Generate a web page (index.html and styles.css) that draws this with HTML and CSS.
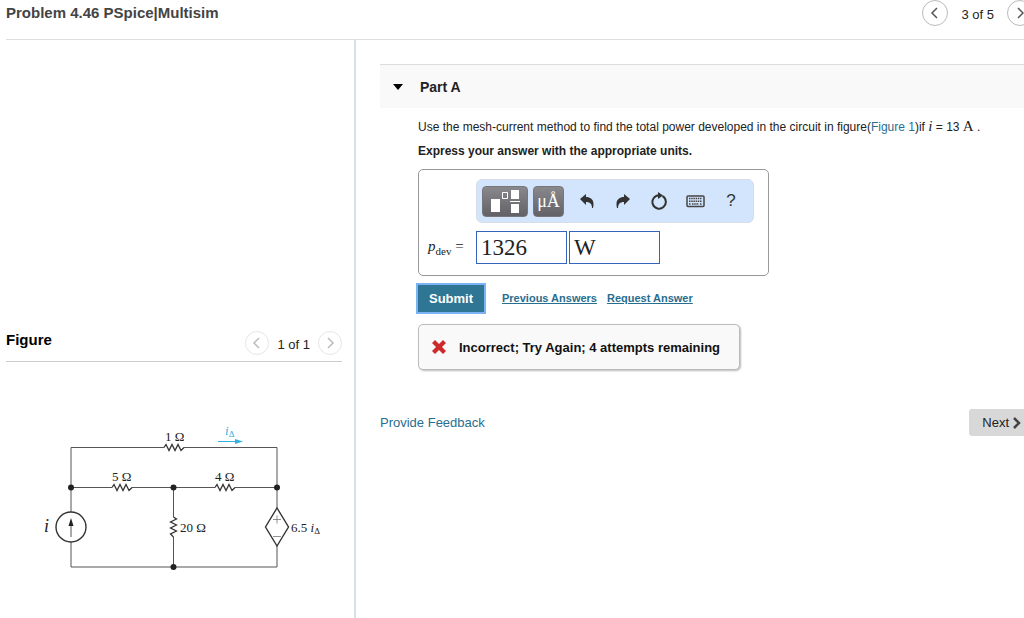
FILE: index.html
```
<!DOCTYPE html>
<html lang="en">
<head>
  <meta charset="UTF-8">
  <meta name="viewport" content="width=device-width, initial-scale=1.0">
  <title>Problem 4.46</title>
  <link rel="stylesheet" href="styles.css">
</head>
<body>
  <header class="header">
    <h1>Problem 4.46 PSpice|Multisim</h1>
    <nav class="pager">
      <button class="round" aria-label="Previous item">
        <svg width="10" height="12" viewBox="0 0 10 12"><path d="M7 1 2 6l5 5"/></svg>
      </button>
      <span>3 of 5</span>
      <button class="round" aria-label="Next item">
        <svg width="10" height="12" viewBox="0 0 10 12"><path d="M3 1l5 5-5 5"/></svg>
      </button>
    </nav>
  </header>

  <div class="columns">
    <aside class="left">
      <div class="figure-head">
        <h2>Figure</h2>
        <nav class="pager small">
          <button class="round" aria-label="Previous figure" disabled>
            <svg width="10" height="12" viewBox="0 0 10 12"><path d="M7 1 2 6l5 5"/></svg>
          </button>
          <span>1 of 1</span>
          <button class="round" aria-label="Next figure" disabled>
            <svg width="10" height="12" viewBox="0 0 10 12"><path d="M3 1l5 5-5 5"/></svg>
          </button>
        </nav>
      </div>

      <svg class="circuit" viewBox="6 372 336 210" role="img" aria-label="Circuit diagram">
        <!-- wires -->
        <g class="wire">
          <path d="M71 512V447.5H164M184 447.5H277V508"/>
          <path d="M71 487.5h41M132 487.5h83M235 487.5h42"/>
          <path d="M173.5 487v30M173.5 537v30"/>
          <path d="M71 542v25H277V546"/>
        </g>
        <!-- resistors -->
        <g class="resistor">
          <path d="M164 447.500l2-3 3 6 3-6 3 6 3-6 3 6 3-3"/>
          <path d="M112 487.500l2-3 3 6 3-6 3 6 3-6 3 6 3-3"/>
          <path d="M215 487.500l2-3 3 6 3-6 3 6 3-6 3 6 3-3"/>
          <path d="M173.500 517l3 2-6 3 6 3-6 3 6 3-6 3 3 3"/>
        </g>
        <!-- nodes -->
        <circle cx="71" cy="487.500" r="3"/>
        <circle cx="173.500" cy="487.500" r="3"/>
        <circle cx="277" cy="487.500" r="3"/>
        <circle cx="173.500" cy="567" r="3"/>
        <!-- current source -->
        <circle class="shape" cx="71" cy="527" r="15"/>
        <path class="wire" d="M71 537V524"/>
        <path d="M71 518l2.500 8h-5z"/>
        <!-- dependent source -->
        <path class="shape" d="M277 508l11.500 19L277 546l-11.500-19z"/>
        <path class="sign" d="M273 519.500h8M277 515.500v8M273 536.500h8"/>
        <!-- i delta arrow -->
        <path class="blue-line" d="M218 441.500h18"/>
        <path class="blue" d="M243 441.500l-8 2.500v-5z"/>
        <text class="blue" x="225" y="435"><tspan class="it">i</tspan><tspan class="sub" dy="2">Δ</tspan></text>
        <text x="165" y="441">1 Ω</text>
        <text x="112" y="481">5 Ω</text>
        <text x="215" y="481">4 Ω</text>
        <text x="180" y="532">20 Ω</text>
        <text x="291" y="532">6.5 <tspan class="it">i</tspan><tspan class="sub" dy="2">Δ</tspan></text>
        <text class="it source" x="44" y="532">i</text>
      </svg>
    </aside>

    <main class="right">
      <div class="part">
        <svg width="10" height="6" viewBox="0 0 10 6"><path d="M0 0h10L5 6z"/></svg>
        <h2>Part A</h2>
      </div>

      <section class="question">
        <p>Use the mesh-current method to find the total power developed in the circuit in figure(<a href="#">Figure 1</a>)if <i class="math">i</i> = 13 <span class="math">A</span> .</p>
        <p class="bold">Express your answer with the appropriate units.</p>

        <div class="answer">
          <div class="toolbar">
            <button class="key wide" aria-label="Templates">
              <svg width="30" height="26" viewBox="0 0 30 26">
                <path class="fill" d="M1 11h9v13H1zM21 2h8v9h-8zM21 16h8v9h-8zM20 13h10v1H20z"/>
                <path class="line" d="M12.500 4.500h5v6h-5z"/>
              </svg>
            </button>
            <button class="key">μÅ</button>
            <button class="tool" aria-label="Undo">
              <svg width="14" height="14" viewBox="0 0 14 14"><path d="M0 5l6-5v3c5 0 9 3 7 11l-1 0c0-4-2-6-6-6v3z"/></svg>
            </button>
            <button class="tool" aria-label="Redo">
              <svg width="14" height="14" viewBox="0 0 14 14"><path d="M14 5L8 0v3C3 3-1 6 1 14l1 0c0-4 2-6 6-6v3z"/></svg>
            </button>
            <button class="tool" aria-label="Reset">
              <svg width="16" height="18" viewBox="0 0 16 18"><path class="ring" d="M11.500 4.200A6.700 6.700 0 1 1 8 3.300"/><path d="M7 0l5 3.500L7 7z"/></svg>
            </button>
            <button class="tool" aria-label="Keyboard">
              <svg width="19" height="13" viewBox="0 0 19 13"><rect class="case" x="1" y="1" width="17" height="10.500" rx="1"/><path class="keys" d="M3 3.500h13M3 6.200h13M3 9h2M6 9h7M14 9h2"/></svg>
            </button>
            <button class="tool" aria-label="Help">?</button>
          </div>
          <div class="fields">
            <label for="value"><i>p</i><sub>dev</sub> =</label>
            <input id="value" type="text" value="1326">
            <input type="text" value="W" aria-label="Units">
          </div>
        </div>

        <div class="actions">
          <button class="submit">Submit</button>
          <a href="#">Previous Answers</a>
          <a href="#">Request Answer</a>
        </div>

        <div class="feedback">
          <svg width="14" height="14" viewBox="0 0 14 14"><path d="M3 0l4 4 4-4 3 3-4 4 4 4-3 3-4-4-4 4-3-3 4-4-4-4z"/></svg>
          <span>Incorrect; Try Again; 4 attempts remaining</span>
        </div>
      </section>

      <footer class="bottom">
        <a href="#">Provide Feedback</a>
        <button class="next">Next
          <svg width="8" height="12" viewBox="0 0 8 12"><path d="M1 1l5 5-5 5"/></svg>
        </button>
      </footer>
    </main>
  </div>
</body>
</html>
```
FILE: styles.css
```
* {
  box-sizing: border-box;
}

body {
  margin: 0;
  min-height: 100vh;
  display: flex;
  flex-direction: column;
  overflow-x: hidden;
  font-family: "Liberation Sans", Arial, sans-serif;
  font-size: 13px;
  color: #222;
  background: #fff;
}

h1, h2, p {
  margin: 0;
}

button {
  font-family: inherit;
  padding: 0;
  border: none;
}

a {
  color: #286e8f;
  text-decoration: none;
}

.header {
  display: flex;
  justify-content: space-between;
  margin-left: 6px;
  height: 40px;
  border-bottom: 1px solid #ddd;
}

.header h1 {
  font-size: 15px;
  line-height: 26px;
  color: #444;
}

.pager {
  display: flex;
  align-items: center;
  gap: 13px;
  font-size: 13px;
}

.header .pager {
  height: 26px;
  margin-right: -9px;
}

.pager span {
  padding-top: 3px;
}

.round {
  display: flex;
  align-items: center;
  justify-content: center;
  width: 26px;
  height: 26px;
  border: 1px solid #bbb;
  border-radius: 50%;
  background: #fff;
}

.round path {
  fill: none;
  stroke: #555;
  stroke-width: 1.5;
}

.small {
  gap: 8px;
}

.small .round {
  width: 24px;
  height: 24px;
  border-color: #e6e6e6;
}

.small .round path {
  stroke: #bbb;
}

.columns {
  flex: 1;
  display: flex;
}

/* left side with the figure */
.left {
  flex: 0 0 356px;
  padding: 290px 12px 0 6px;
  border-right: 2px solid #d5e0ea;
}

.figure-head {
  display: flex;
  justify-content: space-between;
  height: 32px;
  border-bottom: 1px solid #ccc;
}

.figure-head h2 {
  font-size: 15px;
  line-height: 20px;
  color: #000;
}

.figure-head .pager {
  height: 26px;
}

.circuit {
  display: block;
  width: 100%;
  margin-top: 10px;
  font-family: "Liberation Serif", serif;
  font-size: 13px;
  fill: #222;
}

.wire {
  fill: none;
  stroke: #555;
  stroke-width: 1;
}

.resistor {
  fill: none;
  stroke: #333;
  stroke-width: 1.3;
}

.shape {
  fill: #fff;
  stroke: #333;
  stroke-width: 1.4;
}

.sign {
  stroke: #777;
  stroke-width: 0.8;
}

.blue {
  fill: #35b0e0;
}

.blue-line {
  stroke: #35b0e0;
}

.it {
  font-style: italic;
}

.sub {
  font-size: 9px;
}

.source {
  font-size: 18px;
}

/* right side with the question */
.right {
  flex: 1;
  min-width: 0;
  padding: 24px 0 0 24px;
}

.part {
  display: flex;
  align-items: center;
  gap: 17px;
  height: 44px;
  padding-left: 13px;
  border-top: 1px solid #ddd;
  background: #f9f9f9;
}

.part h2 {
  font-size: 14px;
}

.question {
  padding: 6px 0 0 38px;
}

.question p {
  font-size: 12px;
  line-height: 24px;
  white-space: nowrap;
}

.bold {
  font-weight: bold;
}

.math {
  font-family: "Liberation Serif", serif;
  font-size: 15px;
}

.answer {
  width: 351px;
  margin-top: 6px;
  padding: 9px 14px 11px 9px;
  border: 1px solid #999;
  border-radius: 5px;
}

.toolbar {
  display: flex;
  align-items: center;
  height: 44px;
  margin-left: 48px;
  padding-left: 5px;
  border: 1px solid #d8dde5;
  border-radius: 6px;
  background: #d2e5fd;
}

.key {
  display: flex;
  align-items: center;
  justify-content: center;
  width: 31px;
  height: 31px;
  margin-right: 5px;
  border: 1px solid #77777b;
  border-radius: 4px;
  font-family: "Liberation Serif", serif;
  font-size: 18px;
  color: #fff;
  background: linear-gradient(#89898d, #626266);
}

.wide {
  width: 46px;
}

.key .fill {
  fill: #fff;
}

.key .line {
  fill: none;
  stroke: #fff;
}

.tool {
  display: flex;
  align-items: center;
  justify-content: center;
  width: 36px;
  height: 36px;
  font-size: 17px;
  color: #333;
  background: none;
}

.tool svg {
  fill: #333;
}

.tool .ring {
  fill: none;
  stroke: #333;
  stroke-width: 2;
}

.tool .case {
  fill: none;
  stroke: #444;
  stroke-width: 1.5;
}

.tool .keys {
  stroke: #444;
  stroke-width: 1.5;
  stroke-dasharray: 1.500 0.700;
}

.fields {
  display: flex;
  align-items: center;
  gap: 2px;
  margin-top: 8px;
}

.fields label {
  width: 46px;
  font-family: "Liberation Serif", serif;
  font-size: 15px;
  white-space: nowrap;
}

.fields sub {
  font-size: 11px;
}

.fields input {
  width: 91px;
  height: 33px;
  padding: 0 4px;
  border: 1px solid #3564bd;
  font-family: "Liberation Serif", serif;
  font-size: 23px;
  color: #222;
}

.actions {
  display: flex;
  align-items: center;
  gap: 10px;
  margin-top: 9px;
  font-size: 11px;
  font-weight: bold;
}

.actions a {
  padding-bottom: 2px;
  text-decoration: underline;
}

.submit {
  width: 66px;
  height: 27px;
  margin-right: 8px;
  font-size: 13px;
  font-weight: bold;
  color: #fff;
  background: #2f7695;
  box-shadow: 0 0 0 2px #7db2f5;
}

.feedback {
  display: flex;
  align-items: center;
  gap: 13px;
  width: 322px;
  height: 46px;
  margin-top: 12px;
  padding-left: 13px;
  border: 1px solid #bbb;
  border-radius: 5px;
  background: #f9f9f9;
  box-shadow: 1px 1px 2px #bbb;
  font-weight: bold;
  white-space: nowrap;
  color: #111;
}

.feedback svg {
  fill: #cc2a2d;
}

.bottom {
  display: flex;
  align-items: center;
  justify-content: space-between;
  margin-top: 39px;
}

.bottom a {
  font-size: 13px;
}

.next {
  display: flex;
  align-items: center;
  gap: 4px;
  height: 27px;
  padding: 0 3px 0 13px;
  border-radius: 3px 0 0 3px;
  font-size: 13px;
  color: #222;
  background: #d8d8d8;
}

.next path {
  fill: none;
  stroke: #444;
  stroke-width: 2.5;
}
```
